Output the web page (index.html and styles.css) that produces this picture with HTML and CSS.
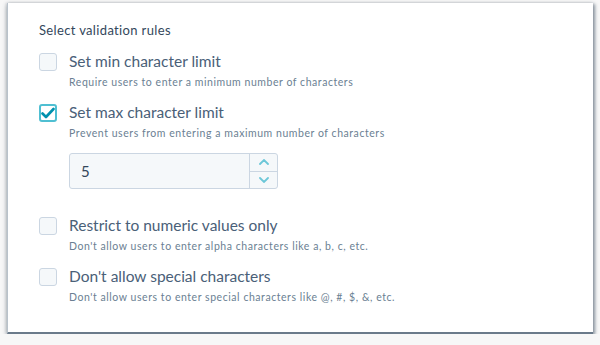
FILE: index.html
```html
<!DOCTYPE html>
<html lang="en">
<head>
    <meta charset="UTF-8">
    <title>Validation rules</title>
    <link rel="stylesheet" href="styles.css">
</head>
<body>
    <div class="card">
        <h3 class="title">Select validation rules</h3>

        <div class="rule">
            <span class="box"></span>
            <div class="rule-text">
                <div class="label">Set min character limit</div>
                <div class="help">Require users to enter a minimum number of characters</div>
            </div>
        </div>

        <div class="rule">
            <span class="box checked">
                <svg width="14" height="12" viewBox="0 0 14 12"><path d="M1.5 6.5 L5 10 L12.5 2" fill="none" stroke="#0091ae" stroke-width="2.6" stroke-linecap="round" stroke-linejoin="round"/></svg>
            </span>
            <div class="rule-text">
                <div class="label">Set max character limit</div>
                <div class="help">Prevent users from entering a maximum number of characters</div>
                <div class="number">
                    <div class="number-value">5</div>
                    <div class="stepper">
                        <span class="step">
                            <svg width="10" height="6" viewBox="0 0 10 6"><path d="M1 5 L5 1 L9 5" fill="none" stroke="#6cc7d8" stroke-width="1.8" stroke-linecap="round"/></svg>
                        </span>
                        <span class="step">
                            <svg width="10" height="6" viewBox="0 0 10 6"><path d="M1 1 L5 5 L9 1" fill="none" stroke="#6cc7d8" stroke-width="1.8" stroke-linecap="round"/></svg>
                        </span>
                    </div>
                </div>
            </div>
        </div>

        <div class="rule spaced">
            <span class="box"></span>
            <div class="rule-text">
                <div class="label">Restrict to numeric values only</div>
                <div class="help">Don't allow users to enter alpha characters like a, b, c, etc.</div>
            </div>
        </div>

        <div class="rule">
            <span class="box"></span>
            <div class="rule-text">
                <div class="label">Don't allow special characters</div>
                <div class="help">Don't allow users to enter special characters like @, #, $, &amp;, etc.</div>
            </div>
        </div>
    </div>
</body>
</html>
```

FILE: styles.css
```css
html {
    background: #f7f7f7;
}
body {
    margin: 0;
    padding: 3px 7px 0 7px;
    font-family: Lato, 'Open Sans', sans-serif;
    color: #33475b;
}
.card {
    position: relative;
    background: #fff;
    height: 331px;
    box-sizing: border-box;
    padding: 19px 0 0 31px;
    border-left: 1px solid #b9c2cb;
    border-bottom: 2px solid #6a7a8a;
    box-shadow: 2px 1px 3px rgba(90, 105, 120, 0.6), 0 3px 5px rgba(80, 95, 110, 0.35), -1px 0 3px rgba(120, 130, 140, 0.35);
}
.title {
    margin: 0 0 14px;
    font-size: 13px;
    line-height: 16px;
    letter-spacing: 0.35px;
    font-weight: 400;
    color: #33475b;
}
.rule {
    display: flex;
    gap: 12px;
    margin-bottom: 15px;
}
.rule.spaced {
    margin-top: 27px;
}
.box {
    width: 16px;
    height: 16px;
    flex: none;
    margin-top: 1px;
    border: 1px solid #cbd6e2;
    border-radius: 3px;
    background: #f5f8fa;
    display: flex;
    align-items: center;
    justify-content: center;
}
.box.checked {
    border: 2px solid #4fbfd2;
    width: 14px;
    height: 14px;
    background: #fff;
}
.label {
    font-size: 15.5px;
    line-height: 19px;
    color: #4a6078;
}
.help {
    font-size: 10.5px;
    line-height: 12px;
    letter-spacing: 0.55px;
    margin-top: 5px;
    color: #6b7f93;
}
.number {
    display: flex;
    margin-top: 14px;
    width: 209px;
    height: 36px;
    border: 1px solid #cbd6e2;
    border-radius: 3px;
    background: #f5f8fa;
    box-sizing: border-box;
}
.number-value {
    flex: 1;
    padding-left: 11px;
    font-size: 15px;
    line-height: 34px;
    color: #33475b;
    border-right: 1px solid #cbd6e2;
}
.stepper {
    width: 27px;
    display: flex;
    flex-direction: column;
}
.step {
    flex: 1;
    display: flex;
    align-items: center;
    justify-content: center;
}
.step + .step {
    border-top: 1px solid #cbd6e2;
}
```
